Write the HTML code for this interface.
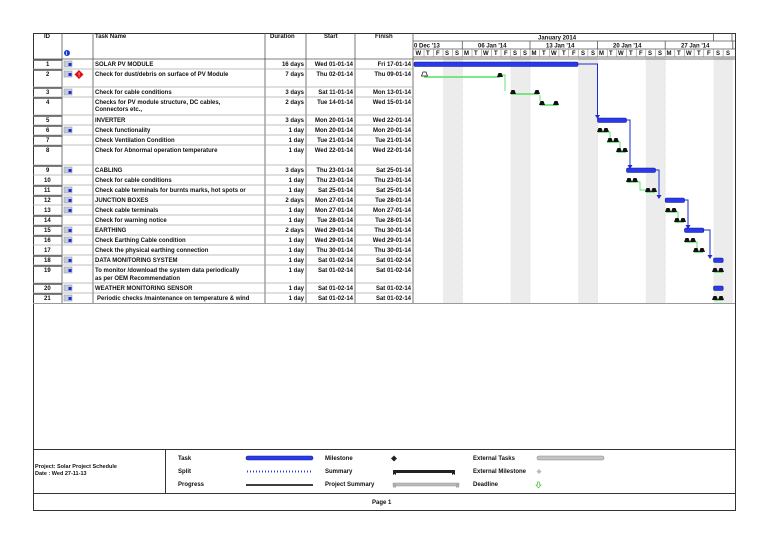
<!DOCTYPE html>
<html><head><meta charset="utf-8"><style>
html,body{margin:0;padding:0;background:#fff;width:768px;height:543px;overflow:hidden}
svg text{font-family:"Liberation Sans",sans-serif;font-size:6px;font-weight:bold;fill:#111}
</style></head><body>
<svg width="768" height="543" viewBox="0 0 768 543" xmlns="http://www.w3.org/2000/svg">
<!-- weekend shading -->
<g fill="#ececec">
<rect x="443" y="57" width="19.3" height="246"/>
<rect x="510.6" y="57" width="19.3" height="246"/>
<rect x="578.2" y="57" width="19.3" height="246"/>
<rect x="645.8" y="57" width="19.3" height="246"/>
<rect x="713.5" y="57" width="19.3" height="246"/>
</g>
<g stroke="#ccc" stroke-width="0.6" stroke-dasharray="1,1">
<line x1="462.3" y1="59" x2="462.3" y2="303"/><line x1="530" y1="59" x2="530" y2="303"/><line x1="597.5" y1="59" x2="597.5" y2="303"/><line x1="665.2" y1="59" x2="665.2" y2="303"/>
</g>
<!-- outer frame -->
<g fill="none" stroke="#333" stroke-width="1">
<rect x="33.5" y="33.5" width="702" height="477"/>
<line x1="33" y1="449.5" x2="736" y2="449.5"/>
<line x1="33" y1="493.5" x2="736" y2="493.5"/>
<line x1="165.5" y1="449" x2="165.5" y2="493"/>
</g>
<!-- table column lines -->
<g stroke="#555" stroke-width="0.8">
<line x1="62" y1="33" x2="62" y2="303"/>
<line x1="93" y1="33" x2="93" y2="303"/>
<line x1="265" y1="33" x2="265" y2="303"/>
<line x1="306" y1="33" x2="306" y2="303"/>
<line x1="355" y1="33" x2="355" y2="303"/>
<line x1="413" y1="33" x2="413" y2="303"/>
<line x1="33" y1="59" x2="735" y2="59"/>
</g>
<g stroke="#999" stroke-width="1">
<line x1="33" y1="303.5" x2="735" y2="303.5"/>
</g>
<!-- row lines -->
<g stroke="#aaa" stroke-width="0.8">
<line x1="33" y1="69" x2="413" y2="69"/><line x1="33" y1="87" x2="413" y2="87"/><line x1="33" y1="97" x2="413" y2="97"/><line x1="33" y1="115" x2="413" y2="115"/><line x1="33" y1="125" x2="413" y2="125"/><line x1="33" y1="135" x2="413" y2="135"/><line x1="33" y1="145" x2="413" y2="145"/><line x1="33" y1="165" x2="413" y2="165"/><line x1="33" y1="175" x2="413" y2="175"/><line x1="33" y1="185" x2="413" y2="185"/><line x1="33" y1="195" x2="413" y2="195"/><line x1="33" y1="205" x2="413" y2="205"/><line x1="33" y1="215" x2="413" y2="215"/><line x1="33" y1="225" x2="413" y2="225"/><line x1="33" y1="235" x2="413" y2="235"/><line x1="33" y1="245" x2="413" y2="245"/><line x1="33" y1="255" x2="413" y2="255"/><line x1="33" y1="265" x2="413" y2="265"/><line x1="33" y1="283" x2="413" y2="283"/><line x1="33" y1="293" x2="413" y2="293"/>
</g>
<g stroke="#555" stroke-width="1.4">
<line x1="33" y1="60" x2="62" y2="60"/><line x1="33" y1="70" x2="62" y2="70"/><line x1="33" y1="88" x2="62" y2="88"/><line x1="33" y1="98" x2="62" y2="98"/><line x1="33" y1="116" x2="62" y2="116"/><line x1="33" y1="126" x2="62" y2="126"/><line x1="33" y1="136" x2="62" y2="136"/><line x1="33" y1="146" x2="62" y2="146"/><line x1="33" y1="166" x2="62" y2="166"/><line x1="33" y1="186" x2="62" y2="186"/><line x1="33" y1="196" x2="62" y2="196"/><line x1="33" y1="216" x2="62" y2="216"/><line x1="33" y1="226" x2="62" y2="226"/><line x1="33" y1="236" x2="62" y2="236"/><line x1="33" y1="256" x2="62" y2="256"/><line x1="33" y1="266" x2="62" y2="266"/><line x1="33" y1="284" x2="62" y2="284"/><line x1="33" y1="294" x2="62" y2="294"/>
</g>
<!-- header -->
<text x="44" y="38">ID</text>
<circle cx="67" cy="53" r="3" fill="#1a3ad8"/><text x="65.8" y="55" style="fill:#fff;font-size:5px">i</text>
<text x="95" y="38">Task Name</text>
<text x="270" y="38">Duration</text>
<text x="324" y="38">Start</text>
<text x="375" y="38">Finish</text>
<!-- timescale -->
<g stroke="#555" stroke-width="0.8" fill="none">
<line x1="413" y1="41" x2="735" y2="41"/><line x1="413" y1="49" x2="735" y2="49"/><line x1="413" y1="57" x2="735" y2="57"/>
<line x1="713.5" y1="33" x2="713.5" y2="41"/><line x1="732" y1="33" x2="732" y2="41"/>
<line x1="462.3" y1="41" x2="462.3" y2="49"/><line x1="530" y1="41" x2="530" y2="49"/><line x1="597.5" y1="41" x2="597.5" y2="49"/><line x1="665.2" y1="41" x2="665.2" y2="49"/><line x1="732.8" y1="41" x2="732.8" y2="49"/>
</g>
<g stroke="#777" stroke-width="0.5" id="dl"></g>
<text x="538" y="39.5">January 2014</text>
<text x="414" y="47.5">0 Dec '13</text>
<text x="478" y="47.5">06 Jan '14</text>
<text x="546" y="47.5">13 Jan '14</text>
<text x="613" y="47.5">20 Jan '14</text>
<text x="681" y="47.5">27 Jan '14</text>
<g style="font-size:5.5px">
<text x="415.5" y="55">W</text><text x="426" y="55">T</text><text x="436" y="55">F</text><text x="445" y="55">S</text><text x="455" y="55">S</text>
<text x="464" y="55">M</text><text x="474" y="55">T</text><text x="483" y="55">W</text><text x="494" y="55">T</text><text x="504" y="55">F</text><text x="513" y="55">S</text><text x="523" y="55">S</text>
<text x="531.5" y="55">M</text><text x="542" y="55">T</text><text x="551" y="55">W</text><text x="562" y="55">T</text><text x="572" y="55">F</text><text x="581" y="55">S</text><text x="591" y="55">S</text>
<text x="599" y="55">M</text><text x="609" y="55">T</text><text x="618" y="55">W</text><text x="629" y="55">T</text><text x="639" y="55">F</text><text x="648" y="55">S</text><text x="658" y="55">S</text>
<text x="666.5" y="55">M</text><text x="677" y="55">T</text><text x="686" y="55">W</text><text x="697" y="55">T</text><text x="707" y="55">F</text><text x="716" y="55">S</text><text x="726" y="55">S</text>
</g>
<g stroke="#777" stroke-width="0.5">
<line x1="424" y1="49" x2="424" y2="57"/><line x1="433.3" y1="49" x2="433.3" y2="57"/><line x1="443" y1="49" x2="443" y2="57"/><line x1="452.6" y1="49" x2="452.6" y2="57"/><line x1="462.3" y1="49" x2="462.3" y2="57"/><line x1="472" y1="49" x2="472" y2="57"/><line x1="481.6" y1="49" x2="481.6" y2="57"/><line x1="491.3" y1="49" x2="491.3" y2="57"/><line x1="501" y1="49" x2="501" y2="57"/><line x1="510.6" y1="49" x2="510.6" y2="57"/><line x1="520.3" y1="49" x2="520.3" y2="57"/><line x1="530" y1="49" x2="530" y2="57"/><line x1="539.6" y1="49" x2="539.6" y2="57"/><line x1="549.3" y1="49" x2="549.3" y2="57"/><line x1="558.9" y1="49" x2="558.9" y2="57"/><line x1="568.6" y1="49" x2="568.6" y2="57"/><line x1="578.2" y1="49" x2="578.2" y2="57"/><line x1="587.9" y1="49" x2="587.9" y2="57"/><line x1="597.5" y1="49" x2="597.5" y2="57"/><line x1="607.2" y1="49" x2="607.2" y2="57"/><line x1="616.8" y1="49" x2="616.8" y2="57"/><line x1="626.5" y1="49" x2="626.5" y2="57"/><line x1="636.2" y1="49" x2="636.2" y2="57"/><line x1="645.8" y1="49" x2="645.8" y2="57"/><line x1="655.5" y1="49" x2="655.5" y2="57"/><line x1="665.2" y1="49" x2="665.2" y2="57"/><line x1="674.8" y1="49" x2="674.8" y2="57"/><line x1="684.5" y1="49" x2="684.5" y2="57"/><line x1="694.1" y1="49" x2="694.1" y2="57"/><line x1="703.8" y1="49" x2="703.8" y2="57"/><line x1="713.5" y1="49" x2="713.5" y2="57"/><line x1="723.1" y1="49" x2="723.1" y2="57"/>
</g>
<!-- indicator icons -->
<defs><g id="ic"><rect x="0" y="0" width="8" height="6" fill="#c8ccd8" stroke="#8890a8" stroke-width="0.5"/><rect x="4.5" y="2" width="3" height="3" fill="#1a2ed0"/></g></defs>
<use href="#ic" x="64" y="61"/><use href="#ic" x="64" y="71"/><use href="#ic" x="64" y="89"/><use href="#ic" x="64" y="127"/><use href="#ic" x="64" y="167"/><use href="#ic" x="64" y="187"/><use href="#ic" x="64" y="197"/><use href="#ic" x="64" y="207"/><use href="#ic" x="64" y="227"/><use href="#ic" x="64" y="237"/><use href="#ic" x="64" y="257"/><use href="#ic" x="64" y="267"/><use href="#ic" x="64" y="285"/><use href="#ic" x="64" y="295"/>
<path d="M79 70 L83.5 74.5 L79 79 L74.5 74.5 Z" fill="#e01010"/><text x="78.2" y="76.5" style="fill:#fff;font-size:5px">!</text>
<!-- table rows -->
<g>
<text x="46" y="66">1</text><text x="95" y="66">SOLAR PV MODULE</text><text x="304" y="66" text-anchor="end">16 days</text><text x="353" y="66" text-anchor="end">Wed 01-01-14</text><text x="411" y="66" text-anchor="end">Fri 17-01-14</text>
<text x="46" y="76">2</text><text x="95" y="76">Check for dust/debris on surface of PV Module</text><text x="304" y="76" text-anchor="end">7 days</text><text x="353" y="76" text-anchor="end">Thu 02-01-14</text><text x="411" y="76" text-anchor="end">Thu 09-01-14</text>
<text x="46" y="94">3</text><text x="95" y="94">Check for cable conditions</text><text x="304" y="94" text-anchor="end">3 days</text><text x="353" y="94" text-anchor="end">Sat 11-01-14</text><text x="411" y="94" text-anchor="end">Mon 13-01-14</text>
<text x="46" y="104">4</text><text x="95" y="104">Checks for PV module structure, DC cables,</text><text x="95" y="111">Connectors etc.,</text><text x="304" y="104" text-anchor="end">2 days</text><text x="353" y="104" text-anchor="end">Tue 14-01-14</text><text x="411" y="104" text-anchor="end">Wed 15-01-14</text>
<text x="46" y="122">5</text><text x="95" y="122">INVERTER</text><text x="304" y="122" text-anchor="end">3 days</text><text x="353" y="122" text-anchor="end">Mon 20-01-14</text><text x="411" y="122" text-anchor="end">Wed 22-01-14</text>
<text x="46" y="132">6</text><text x="95" y="132">Check functionality</text><text x="304" y="132" text-anchor="end">1 day</text><text x="353" y="132" text-anchor="end">Mon 20-01-14</text><text x="411" y="132" text-anchor="end">Mon 20-01-14</text>
<text x="46" y="142">7</text><text x="95" y="142">Check Ventilation Condition</text><text x="304" y="142" text-anchor="end">1 day</text><text x="353" y="142" text-anchor="end">Tue 21-01-14</text><text x="411" y="142" text-anchor="end">Tue 21-01-14</text>
<text x="46" y="152">8</text><text x="95" y="152">Check for Abnormal operation temperature</text><text x="304" y="152" text-anchor="end">1 day</text><text x="353" y="152" text-anchor="end">Wed 22-01-14</text><text x="411" y="152" text-anchor="end">Wed 22-01-14</text>
<text x="46" y="172">9</text><text x="95" y="172">CABLING</text><text x="304" y="172" text-anchor="end">3 days</text><text x="353" y="172" text-anchor="end">Thu 23-01-14</text><text x="411" y="172" text-anchor="end">Sat 25-01-14</text>
<text x="44" y="182">10</text><text x="95" y="182">Check for cable conditions</text><text x="304" y="182" text-anchor="end">1 day</text><text x="353" y="182" text-anchor="end">Thu 23-01-14</text><text x="411" y="182" text-anchor="end">Thu 23-01-14</text>
<text x="44" y="192">11</text><text x="95" y="192">Check  cable terminals for burnts marks, hot spots or</text><text x="304" y="192" text-anchor="end">1 day</text><text x="353" y="192" text-anchor="end">Sat 25-01-14</text><text x="411" y="192" text-anchor="end">Sat 25-01-14</text>
<text x="44" y="202">12</text><text x="95" y="202">JUNCTION BOXES</text><text x="304" y="202" text-anchor="end">2 days</text><text x="353" y="202" text-anchor="end">Mon 27-01-14</text><text x="411" y="202" text-anchor="end">Tue 28-01-14</text>
<text x="44" y="212">13</text><text x="95" y="212">Check cable terminals</text><text x="304" y="212" text-anchor="end">1 day</text><text x="353" y="212" text-anchor="end">Mon 27-01-14</text><text x="411" y="212" text-anchor="end">Mon 27-01-14</text>
<text x="44" y="222">14</text><text x="95" y="222">Check for warning notice</text><text x="304" y="222" text-anchor="end">1 day</text><text x="353" y="222" text-anchor="end">Tue 28-01-14</text><text x="411" y="222" text-anchor="end">Tue 28-01-14</text>
<text x="44" y="232">15</text><text x="95" y="232">EARTHING</text><text x="304" y="232" text-anchor="end">2 days</text><text x="353" y="232" text-anchor="end">Wed 29-01-14</text><text x="411" y="232" text-anchor="end">Thu 30-01-14</text>
<text x="44" y="242">16</text><text x="95" y="242">Check Earthing Cable condition</text><text x="304" y="242" text-anchor="end">1 day</text><text x="353" y="242" text-anchor="end">Wed 29-01-14</text><text x="411" y="242" text-anchor="end">Wed 29-01-14</text>
<text x="44" y="252">17</text><text x="95" y="252">Check the physical earthing connection</text><text x="304" y="252" text-anchor="end">1 day</text><text x="353" y="252" text-anchor="end">Thu 30-01-14</text><text x="411" y="252" text-anchor="end">Thu 30-01-14</text>
<text x="44" y="262">18</text><text x="95" y="262">DATA MONITORING SYSTEM</text><text x="304" y="262" text-anchor="end">1 day</text><text x="353" y="262" text-anchor="end">Sat 01-02-14</text><text x="411" y="262" text-anchor="end">Sat 01-02-14</text>
<text x="44" y="272">19</text><text x="95" y="272">To monitor /download the system data periodically</text><text x="95" y="280">as per OEM Recommendation</text><text x="304" y="272" text-anchor="end">1 day</text><text x="353" y="272" text-anchor="end">Sat 01-02-14</text><text x="411" y="272" text-anchor="end">Sat 01-02-14</text>
<text x="44" y="290">20</text><text x="95" y="290">WEATHER MONITORING SENSOR</text><text x="304" y="290" text-anchor="end">1 day</text><text x="353" y="290" text-anchor="end">Sat 01-02-14</text><text x="411" y="290" text-anchor="end">Sat 01-02-14</text>
<text x="44" y="300">21</text><text x="97" y="300">Periodic checks /maintenance on temperature &amp; wind</text><text x="304" y="300" text-anchor="end">1 day</text><text x="353" y="300" text-anchor="end">Sat 01-02-14</text><text x="411" y="300" text-anchor="end">Sat 01-02-14</text>
</g>
<rect x="240" y="186" width="24.5" height="8" fill="#fff" opacity="0"/>
<!-- gantt -->
<defs>
<path id="mk" d="M-3 2 L-1.5 -2 L1.5 -2 L3 2 Z" fill="#111"/>
</defs>
<!-- blue links -->
<g stroke="#1a2ed0" stroke-width="1" fill="none">
<path d="M578 64 H597.5 V116"/><path d="M626.5 120 H630 V166"/><path d="M655.5 170 H659 V196"/><path d="M684.5 200 H688 V226"/><path d="M704 230 H710 V256"/>
</g>
<g fill="#1a2ed0">
<path d="M595 115 L600 115 L597.5 119 Z"/><path d="M627.5 165 L632.5 165 L630 169 Z"/><path d="M656.5 195 L661.5 195 L659 199 Z"/><path d="M685.5 225 L690.5 225 L688 229 Z"/><path d="M707.5 255 L712.5 255 L710 259 Z"/>
</g>
<!-- summary bars -->
<g fill="#2a3ae8" stroke="#101a90" stroke-width="0.6">
<rect x="414" y="62" width="164" height="4.5" rx="1.5"/>
<rect x="597.5" y="118" width="29" height="4.5" rx="1.5"/>
<rect x="626.5" y="168" width="29" height="4.5" rx="1.5"/>
<rect x="665.2" y="198" width="19.3" height="4.5" rx="1.5"/>
<rect x="684.5" y="228" width="19.3" height="4.5" rx="1.5"/>
<rect x="713.5" y="258" width="9.7" height="4.5" rx="1.5"/>
<rect x="713.5" y="286" width="9.7" height="4.5" rx="1.5"/>
</g>
<!-- green task lines -->
<g stroke="#55e060" stroke-width="1.6" fill="none">
<line x1="424" y1="77" x2="500" y2="77"/>
<line x1="511" y1="94" x2="539" y2="94"/>
<line x1="540" y1="105" x2="558" y2="105"/>
<line x1="598" y1="132" x2="607" y2="132"/><line x1="607" y1="142" x2="617" y2="142"/><line x1="617" y1="152" x2="626" y2="152"/>
<line x1="627" y1="182" x2="636" y2="182"/><line x1="646" y1="192" x2="655" y2="192"/>
<line x1="666" y1="212" x2="675" y2="212"/><line x1="675" y1="222" x2="684" y2="222"/>
<line x1="685" y1="242" x2="694" y2="242"/><line x1="694" y1="252" x2="703" y2="252"/>
<line x1="714" y1="272" x2="723" y2="272"/><line x1="714" y1="300" x2="723" y2="300"/>
</g>
<g stroke="#55e060" stroke-width="0.9" fill="none">
<path d="M501 75 H505 V91"/><path d="M540 95 V101"/><path d="M605 132 H610 V139"/><path d="M615 142 H620 V149"/><path d="M634 182 H640 V190 H646"/><path d="M673 212 H678 V219"/><path d="M692 242 H697 V249"/>
</g>
<!-- markers -->
<path d="M421.5 76 L423 72 L426 72 L427.5 76 Z" fill="#fff" stroke="#111" stroke-width="0.7"/>
<g>
<use href="#mk" x="500" y="75"/>
<use href="#mk" x="513" y="92"/><use href="#mk" x="537" y="92"/>
<use href="#mk" x="542" y="103"/><use href="#mk" x="556" y="103"/>
<use href="#mk" x="600" y="130"/><use href="#mk" x="606" y="130"/>
<use href="#mk" x="610" y="140"/><use href="#mk" x="616" y="140"/>
<use href="#mk" x="619" y="150"/><use href="#mk" x="625" y="150"/>
<use href="#mk" x="629" y="180"/><use href="#mk" x="635" y="180"/>
<use href="#mk" x="648" y="190"/><use href="#mk" x="654" y="190"/>
<use href="#mk" x="668" y="210"/><use href="#mk" x="674" y="210"/>
<use href="#mk" x="677" y="220"/><use href="#mk" x="683" y="220"/>
<use href="#mk" x="687" y="240"/><use href="#mk" x="693" y="240"/>
<use href="#mk" x="696" y="250"/><use href="#mk" x="702" y="250"/>
<use href="#mk" x="715" y="270"/><use href="#mk" x="721" y="270"/>
<use href="#mk" x="715" y="298"/><use href="#mk" x="721" y="298"/>
</g>
<!-- legend -->
<text x="35" y="468" style="font-size:5.5px">Project: Solar Project Schedule</text>
<text x="35" y="475" style="font-size:5.5px">Date : Wed 27-11-13</text>
<text x="178" y="460">Task</text><text x="178" y="473">Split</text><text x="178" y="486">Progress</text>
<rect x="246" y="456" width="67" height="4" rx="2" fill="#2a3ae8" stroke="#101a90" stroke-width="0.6"/>
<line x1="247" y1="471.5" x2="313" y2="471.5" stroke="#2a3ae8" stroke-width="2" stroke-dasharray="1,2"/>
<line x1="246" y1="485" x2="313" y2="485" stroke="#222" stroke-width="1.8"/>
<text x="325" y="460">Milestone</text><text x="325" y="473">Summary</text><text x="325" y="486">Project Summary</text>
<path d="M394 455.5 L397 458.5 L394 461.5 L391 458.5 Z" fill="#222"/>
<rect x="393" y="470" width="62" height="3" fill="#222"/><path d="M393 470 h3 v5 l-1.5 -1 l-1.5 1 Z M455 470 h-3 v5 l1.5 -1 l1.5 1 Z" fill="#222"/>
<rect x="393" y="483" width="66" height="3" fill="#bbb" stroke="#999" stroke-width="0.5"/><path d="M393 483 h3 v5 l-1.5 -1 l-1.5 1 Z M459 483 h-3 v5 l1.5 -1 l1.5 1 Z" fill="#aaa"/>
<text x="473" y="460">External Tasks</text><text x="473" y="473">External Milestone</text><text x="473" y="486">Deadline</text>
<rect x="537" y="456" width="67" height="4" rx="2" fill="#c4c4c4" stroke="#888" stroke-width="0.6"/>
<path d="M539 469 L541.5 471.5 L539 474 L536.5 471.5 Z" fill="#bbb"/>
<path d="M537.5 482 h2 v3 h1.5 l-2.5 3 l-2.5 -3 h1.5 Z" fill="none" stroke="#55c040" stroke-width="0.7"/>
<text x="372" y="504">Page 1</text>
</svg>
</body></html>
